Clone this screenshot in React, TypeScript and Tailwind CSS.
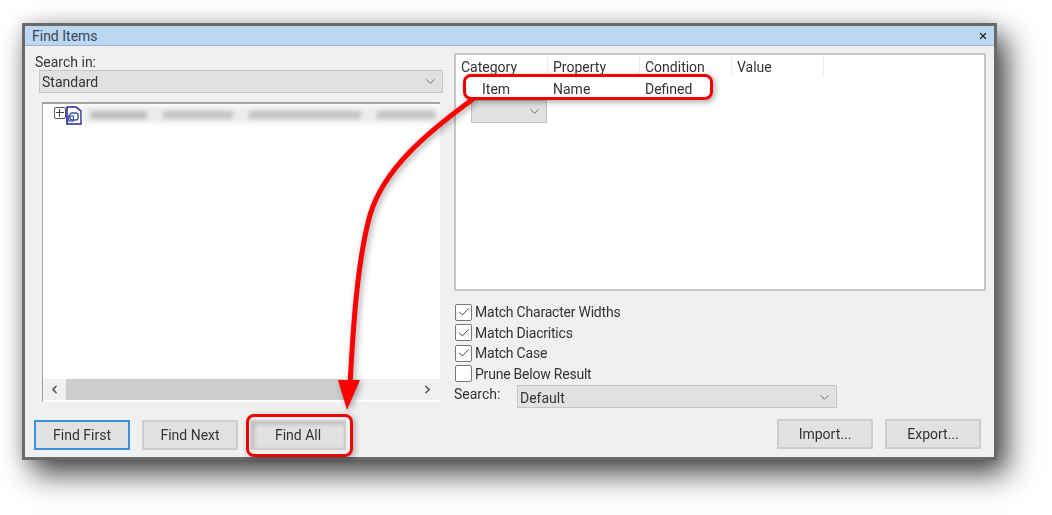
import { ChevronDown, ChevronLeft, ChevronRight, Check, X } from 'lucide-react';

const options = [
  { label: 'Match Character Widths', checked: true },
  { label: 'Match Diacritics', checked: true },
  { label: 'Match Case', checked: true },
  { label: 'Prune Below Result', checked: false },
];

const columns = ['Category', 'Property', 'Condition', 'Value'];

function Select({ label, className }: { label: string; className: string }) {
  return (
    <div className={`flex items-center justify-between bg-[#e1e1e1] border border-[#c4c4c4] pl-[2px] pr-[4px] ${className}`}>
      <span>{label}</span>
      <ChevronDown className="w-[15px] h-[15px] text-[#666]" strokeWidth={1.5} />
    </div>
  );
}

function Button({ label, className = 'border-[#cdcdcd]' }: { label: string; className?: string }) {
  return (
    <button className={`w-[96px] h-[30px] bg-[#e1e1e1] border-2 flex items-center justify-center ${className}`}>
      {label}
    </button>
  );
}

export default function App() {
  return (
    <div className="relative w-[1052px] h-[515px] bg-white overflow-hidden pl-[22px] pt-[23px] font-['Roboto',sans-serif] text-[14px] leading-[18px] text-[#333]">
      {/* Dialog */}
      <div className="w-[975px] h-[437px] border-[3px] border-[#6a6a6a] bg-[#f0f0f0] flex flex-col shadow-[10px_14px_28px_rgba(0,0,0,0.72),0_0_18px_rgba(0,0,0,0.15)] blur-[0.4px]">
        {/* Title bar */}
        <div className="h-[20px] shrink-0 bg-[#bcd7f1] border-b border-[#9db4ca] flex items-center justify-between pl-[7px] pr-[6px] text-[#37475a]">
          <span>Find Items</span>
          <X className="w-[10px] h-[10px] text-[#222]" strokeWidth={3} />
        </div>

        <div className="flex-1 flex pl-[9px] pr-[8px]">
          {/* Left column */}
          <div className="w-[412px] shrink-0 flex flex-col">
            <div className="h-[14px] mt-[9px] flex items-center pl-[1px]">Search in:</div>
            <Select label="Standard" className="ml-[5px] mt-[1px] w-[404px] h-[23px]" />

            {/* Tree */}
            <div className="ml-[8px] mt-[9px] w-[398px] h-[300px] bg-white border-t-2 border-l border-t-[#a0a0a0] border-l-[#a0a0a0] flex flex-col">
              <div className="flex-1 flex items-start pl-[11px] pt-[2px]">
                <div className="w-[12px] h-[12px] mt-[1px] border border-[#555] rounded-[2px] relative">
                  <div className="absolute left-[1px] right-[1px] top-[4px] h-px bg-[#444]" />
                  <div className="absolute top-[1px] bottom-[1px] left-[4px] w-px bg-[#444]" />
                </div>
                <svg width="16" height="19" viewBox="0 0 16 19" className="shrink-0">
                  <path d="M1 1h9l5 4v13H1z" fill="#fff" stroke="#26269c" strokeWidth="1.6" />
                  <rect x="4" y="7" width="8" height="7" rx="2" fill="none" stroke="#3c5aa8" strokeWidth="1.4" />
                  <rect x="2.5" y="10" width="5" height="5" fill="none" stroke="#3c5aa8" strokeWidth="1.2" />
                </svg>
                <div className="flex-1 h-[17px] ml-[1px] flex items-center gap-[16px] pl-[8px] bg-[#ececec] blur-[2px]">
                  <div className="w-[56px] h-[8px] bg-[#bdbdbd]" />
                  <div className="w-[70px] h-[8px] bg-[#c4c4c4]" />
                  <div className="w-[112px] h-[8px] bg-[#c4c4c4]" />
                  <div className="w-[58px] h-[8px] bg-[#c4c4c4]" />
                </div>
              </div>
              {/* Scrollbar */}
              <div className="h-[21px] mb-[2px] bg-[#f0f0f0] flex items-center text-[#555]">
                <div className="w-[23px] flex justify-center">
                  <ChevronLeft className="w-[13px] h-[13px]" strokeWidth={3} />
                </div>
                <div className="w-[278px] h-full bg-[#cdcdcd]" />
                <div className="flex-1 flex justify-end pr-[6px]">
                  <ChevronRight className="w-[13px] h-[13px]" strokeWidth={3} />
                </div>
              </div>
            </div>

            {/* Find buttons */}
            <div className="flex gap-[12px] mt-[18px]">
              <Button label="Find First" className="border-[#3b8fdc]" />
              <Button label="Find Next" />
              <Button label="Find All" className="border-[#cdcdcd] shadow-[inset_2px_2px_4px_rgba(0,0,0,0.18)]" />
            </div>
          </div>

          {/* Right column */}
          <div className="flex-1 flex flex-col pl-[8px] min-w-0">
            <div className="mt-[7px] w-[532px] h-[238px] bg-white border-2 border-[#c6c6c6] flex flex-col">
              <div className="flex h-[22px]">
                {columns.map((col) => (
                  <div key={col} className="w-[92px] border-r border-[#ececec] pl-[5px] pt-[3px]">
                    {col}
                  </div>
                ))}
              </div>
              <div className="flex h-[23px] items-center">
                <div className="w-[92px] pl-[26px]">Item</div>
                <div className="w-[92px] pl-[5px]">Name</div>
                <div className="w-[92px] pl-[5px]">Defined</div>
              </div>
              <Select label="" className="ml-[15px] w-[76px] h-[23px]" />
            </div>

            <div className="mt-[13px] flex flex-col gap-[4.5px] pl-[1px]">
              {options.map((opt) => (
                <div key={opt.label} className="flex items-center h-[16px] gap-[3px]">
                  <div className="w-[17px] h-[17px] bg-white border border-[#777] rounded-[2px] flex items-center justify-center">
                    {opt.checked && <Check className="w-[14px] h-[14px] text-[#333]" strokeWidth={1.6} />}
                  </div>
                  <span className="tracking-[-0.22px]">{opt.label}</span>
                </div>
              ))}
            </div>

            <div className="flex items-start mt-[2px]">
              <span className="w-[63px] pt-[1px]">Search:</span>
              <Select label="Default" className="w-[320px] h-[23px] mt-[1px] pt-[3px]" />
            </div>

            <div className="flex justify-end gap-[12px] mt-[11px] pr-[5px]">
              <Button label="Import..." />
              <Button label="Export..." />
            </div>
          </div>
        </div>
      </div>

      {/* Annotations */}
      <div className="absolute left-[463px] top-[74px] w-[250px] h-[26px] border-[3px] border-[#f00000] rounded-[8px] shadow-[2px_2px_6px_rgba(0,0,0,0.35)] blur-[0.3px]" />
      <div className="absolute left-[246px] top-[414px] w-[107px] h-[43px] border-[3px] border-[#f00000] rounded-[8px] shadow-[2px_2px_6px_rgba(0,0,0,0.3)] blur-[0.3px]" />
      <svg width="1052" height="515" viewBox="0 0 1052 515" className="absolute left-0 top-0 pointer-events-none drop-shadow-[2px_2px_3px_rgba(0,0,0,0.35)]">
        <path d="M473 99 C 428 132, 384 168, 370 215 C 357 262, 353 330, 350 385" fill="none" stroke="#ff0000" strokeWidth="5" />
        <polygon points="338,380 360,380 347,410" fill="#ff0000" />
      </svg>
    </div>
  );
}
